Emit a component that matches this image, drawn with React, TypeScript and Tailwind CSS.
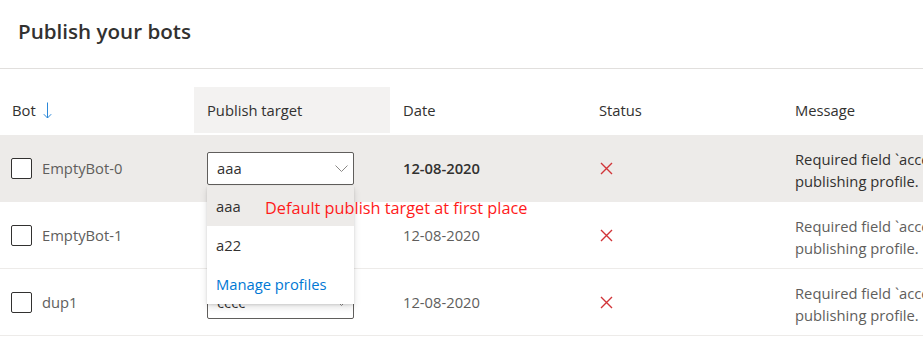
import React from 'react';

interface BotRow {
  name: string;
  target: string;
  date: string;
  message: string;
  selected?: boolean;
}

const rows: BotRow[] = [
  { name: 'EmptyBot-0', target: 'aaa', date: '12-08-2020', message: 'Required field `accessToken` is missing in publishing profile.', selected: true },
  { name: 'EmptyBot-1', target: 'a22', date: '12-08-2020', message: 'Required field `accessToken` is missing in publishing profile.' },
  { name: 'dup1', target: 'cccc', date: '12-08-2020', message: 'Required field `accessToken` is missing in publishing profile.' },
];

function Chevron() {
  return (
    <svg width="13" height="7" viewBox="0 0 13 7" className="shrink-0">
      <polyline points="0.5,0.5 6.5,6.5 12.5,0.5" fill="none" stroke="#8a8886" strokeWidth="1" />
    </svg>
  );
}

function SortArrow() {
  return (
    <svg width="9" height="17" viewBox="0 0 9 17" className="shrink-0">
      <path d="M4.5 0.5 V16 M0.8 12.2 L4.5 16 L8.2 12.2" fill="none" stroke="#2b88d8" strokeWidth="1" />
    </svg>
  );
}

function ErrorIcon() {
  return (
    <svg width="13" height="13" viewBox="0 0 13 13">
      <path d="M1 1 L12 12 M12 1 L1 12" stroke="#d13438" strokeWidth="1.4" fill="none" />
    </svg>
  );
}

function TargetSelect({ value }: { value: string }) {
  return (
    <div className="w-[147px] h-[33px] border border-[#605e5c] rounded-[2px] bg-white flex items-center justify-between pl-[9px] pr-[5px] text-[#323130]">
      <span>{value}</span>
      <Chevron />
    </div>
  );
}

export default function App() {
  return (
    <div
      className="relative w-[923px] h-[359px] overflow-hidden bg-white text-[14.75px] text-[#323130]"
      style={{ fontFamily: "'Open Sans', 'Liberation Sans', sans-serif" }}
    >
      {/* Page heading */}
      <div className="h-[69px] border-b border-[#e1dfdd] px-[18px] pt-[17px]">
        <h1 className="text-[20.6px] font-semibold leading-[29px]">Publish your bots</h1>
      </div>

      <div className="pt-[18px]">
        {/* Column headers */}
        <div className="flex h-[46px] mb-[2px]">
          <div className="w-[194px] shrink-0 pl-[12px] flex items-center gap-[7px]">
            <span>Bot</span>
            <SortArrow />
          </div>
          <div className="w-[196px] shrink-0 pl-[13px] flex items-center bg-[#f3f2f1]">Publish target</div>
          <div className="w-[196px] shrink-0 pl-[13px] flex items-center">Date</div>
          <div className="w-[196px] shrink-0 pl-[13px] flex items-center">Status</div>
          <div className="w-[320px] shrink-0 pl-[13px] flex items-center">Message</div>
        </div>

        {/* Rows */}
        {rows.map((row) => (
          <div
            key={row.name}
            className={`flex h-[67px] border-b border-[#edebe9] text-[#605e5c] ${row.selected ? 'bg-[#edebe9]' : ''}`}
          >
            <div className="w-[194px] shrink-0 pl-[11px] flex items-center gap-[10px]">
              <span className="w-[21px] h-[21px] rounded-[2px] border border-[#323130] bg-white shrink-0" />
              <span>{row.name}</span>
            </div>
            <div className="w-[196px] shrink-0 pl-[13px] flex items-center">
              <TargetSelect value={row.target} />
            </div>
            <div className={`w-[196px] shrink-0 pl-[13px] flex items-center ${row.selected ? 'font-semibold text-[#323130]' : ''}`}>
              {row.date}
            </div>
            <div className="w-[196px] shrink-0 pl-[14px] flex items-center">
              <ErrorIcon />
            </div>
            <div className="w-[330px] shrink-0 pl-[13px] pt-[3px] flex items-center leading-[22px]">
              <span className={row.selected ? 'text-[#323130]' : ''}>{row.message}</span>
            </div>
          </div>
        ))}
      </div>

      {/* Open dropdown menu */}
      <div className="absolute left-[207px] top-[186px] w-[147px] bg-white shadow-[0_3px_7px_rgba(0,0,0,0.13),0_1px_2px_rgba(0,0,0,0.11)]">
        <div className="h-[40px] px-[9px] flex items-center bg-[#edebe9] text-[#323130]">aaa</div>
        <div className="h-[39px] px-[9px] flex items-center text-[#323130]">a22</div>
        <div className="h-[39px] px-[9px] flex items-center text-[#0078d4]">Manage profiles</div>
      </div>

      {/* Annotation */}
      <div className="absolute left-[265px] top-[196px] text-[16.3px] leading-[24px] text-[#ff1a1a]">
        Default publish target at first place
      </div>
    </div>
  );
}
